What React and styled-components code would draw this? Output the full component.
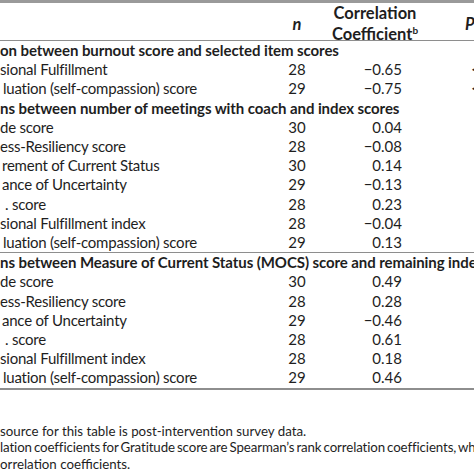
import React from 'react';
import styled, { createGlobalStyle } from 'styled-components';

const GlobalStyle = createGlobalStyle`
  html, body {
    margin: 0;
    padding: 0;
    background: #fff;
  }
  body {
    font-family: Lato, 'Liberation Sans', sans-serif;
    color: #1e1e1e;
  }
`;

const Frame = styled.div`
  width: 474px;
  height: 474px;
  overflow: hidden;
  background: #fff;
`;

const Table = styled.div`
  width: 540px;
  border-top: 3px solid #9a9a9a;
  border-bottom: 2px solid #8e8e8e;
  font-size: 15px;
  line-height: 19.2px;
`;

const Row = styled.div`
  display: grid;
  grid-template-columns: 280px 34px 122px 104px;
  white-space: nowrap;
`;

const HeadRow = styled(Row)`
  height: 37px;
  align-items: center;
  border-bottom: 1px solid #8e8e8e;
  font-weight: 700;
  font-size: 16.5px;
  line-height: 21px;
`;

const HeadCell = styled.div`
  text-align: ${(p) => p.$align || 'center'};
  padding-left: ${(p) => p.$pad || 0}px;
  font-style: ${(p) => (p.$italic ? 'italic' : 'normal')};
`;

const Sup = styled.sup`
  font-size: 10px;
  line-height: 0;
  vertical-align: 6px;
`;

const Section = styled.div`
  font-weight: 700;
  letter-spacing: -0.08px;
  white-space: nowrap;
  border-top: ${(p) => (p.$ruled ? '1px solid #8e8e8e' : 'none')};
`;

const Label = styled.div`
  padding-left: ${(p) => p.$indent || 0}px;
  letter-spacing: -0.23px;
  overflow: hidden;
`;

const N = styled.div`
  text-align: center;
`;

const Coef = styled.div`
  text-align: right;
  padding-right: 34px;
`;

const P = styled.div`
  padding-left: 35px;
`;

const Notes = styled.div`
  margin-top: 33px;
  font-size: 13.3px;
  line-height: 16.5px;
  white-space: nowrap;
`;

const Note = styled.div`
  letter-spacing: ${(p) => (p.$tight ? '-0.12px' : '0')};
  word-spacing: ${(p) => (p.$tight ? '-1.2px' : '0')};
`;

const sections = [
  {
    title: 'on between burnout score and selected item scores',
    rows: [
      ['sional Fulfillment', 0, '28', '\u22120.65', '<0.001'],
      ['luation (self-compassion) score', 3, '29', '\u22120.75', '<0.001'],
    ],
  },
  {
    title: 'ns between number of meetings with coach and index scores',
    rows: [
      ['de score', 0, '30', '0.04'],
      ['ess-Resiliency score', 0, '28', '\u22120.08'],
      ['rement of Current Status', 2, '30', '0.14'],
      ['ance of Uncertainty', 2, '29', '\u22120.13'],
      ['. score', 5, '28', '0.23'],
      ['sional Fulfillment index', 0, '28', '\u22120.04'],
      ['luation (self-compassion) score', 3, '29', '0.13'],
    ],
  },
  {
    title: 'ns between Measure of Current Status (MOCS) score and remaining index scores',
    ruled: true,
    rows: [
      ['de score', 0, '30', '0.49'],
      ['ess-Resiliency score', 0, '28', '0.28'],
      ['ance of Uncertainty', 2, '29', '\u22120.46'],
      ['. score', 5, '28', '0.61'],
      ['sional Fulfillment index', 0, '28', '0.18'],
      ['luation (self-compassion) score', 3, '29', '0.46'],
    ],
  },
];

const App = () => {
  return (
    <>
      <GlobalStyle />
      <Frame>
        <Table>
          <HeadRow>
            <HeadCell />
            <HeadCell $italic>n</HeadCell>
            <HeadCell>
              Correlation
              <br />
              Coefficient<Sup>b</Sup>
            </HeadCell>
            <HeadCell $align='left' $pad={29} $italic>
              P
            </HeadCell>
          </HeadRow>
          {sections.map((s, i) => (
            <React.Fragment key={i}>
              <Section $ruled={s.ruled}>{s.title}</Section>
              {s.rows.map((r, j) => (
                <Row key={j}>
                  <Label $indent={r[1]}>{r[0]}</Label>
                  <N>{r[2]}</N>
                  <Coef>{r[3]}</Coef>
                  <P>{r[4] || ''}</P>
                </Row>
              ))}
            </React.Fragment>
          ))}
        </Table>
        <Notes>
          <Note>source for this table is post-intervention survey data.</Note>
          <Note $tight>
            lation coefficients for Gratitude score are Spearman’s rank
            correlation coefficients, while
          </Note>
          <Note>orrelation coefficients.</Note>
        </Notes>
      </Frame>
    </>
  );
};

export default App;
